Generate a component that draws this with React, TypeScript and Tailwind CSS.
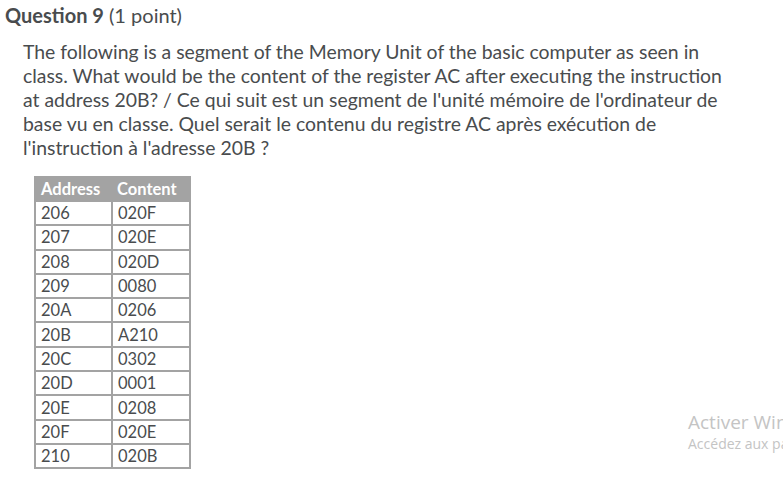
const rows: [string, string][] = [
  ["206", "020F"],
  ["207", "020E"],
  ["208", "020D"],
  ["209", "0080"],
  ["20A", "0206"],
  ["20B", "A210"],
  ["20C", "0302"],
  ["20D", "0001"],
  ["20E", "0208"],
  ["20F", "020E"],
  ["210", "020B"],
];

export default function App() {
  return (
    <main className="relative w-[783px] h-[484px] overflow-hidden bg-white text-[#494c4e] font-['Lato',sans-serif]">
      <h2 className="pl-[5px] pt-[3px] text-[20px] leading-[24px]">
        <span className="font-bold">Question 9</span> <span>(1 point)</span>
      </h2>

      <div className="pl-[23px] pt-[13px]">
        <p className="w-[712px] text-[19.4px] leading-[24px]">
          The following is a segment of the Memory Unit of the basic computer as seen in class. What
          would be the content of the register AC after executing the instruction at address 20B? / Ce
          qui suit est un segment de l'unité mémoire de l'ordinateur de base vu en classe. Quel serait
          le contenu du registre AC après exécution de l'instruction à l'adresse 20B ?
        </p>

        <table className="mt-[16px] ml-[11px] border-collapse border-2 border-[#a3a3a3] text-[16.5px] leading-[20px]">
          <thead>
            <tr className="bg-[#a3a3a3] text-white">
              <th className="w-[77px] h-[24px] px-[5px] text-left font-bold">Address</th>
              <th className="w-[78px] h-[24px] px-[5px] text-left font-bold">Content</th>
            </tr>
          </thead>
          <tbody>
            {rows.map(([addr, content]) => (
              <tr key={addr} className="h-[24.3px]">
                <td className="border-2 border-[#a3a3a3] px-[5px]">{addr}</td>
                <td className="border-2 border-[#a3a3a3] px-[5px]">{content}</td>
              </tr>
            ))}
          </tbody>
        </table>
      </div>

      <div className="absolute left-[688px] top-[409px] whitespace-nowrap text-[#c4c4c4] font-['Open_Sans',sans-serif]">
        <div className="text-[19px] leading-[26px]">Activer Windows</div>
        <div className="text-[14px] leading-[18px]">Accédez aux paramètres</div>
      </div>
    </main>
  );
}
